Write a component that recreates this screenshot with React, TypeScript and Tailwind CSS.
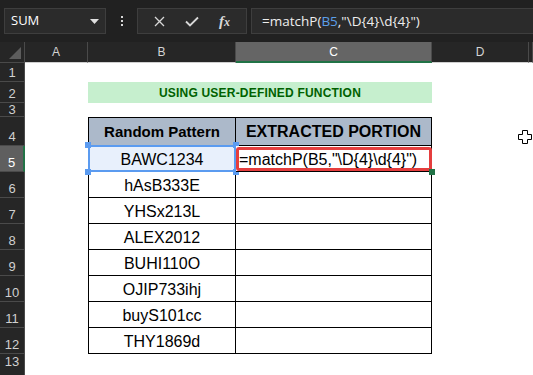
import React from 'react';

const rows = [1, 2, 3, 4, 5, 6, 7, 8, 9, 10, 11, 12, 13];
const patterns = ['BAWC1234', 'hAsB333E', 'YHSx213L', 'ALEX2012', 'BUHI110O', 'OJIP733ihj', 'buyS101cc', 'THY1869d'];

function Handle({ className }: { className: string }) {
  return <div className={`absolute w-[6px] h-[6px] bg-[#5b9bf0] ${className}`} />;
}

function RowHead({ n }: { n: number }) {
  const active = n === 5;
  const pad = n === 13 ? 'pb-[11px]' : n === 3 ? 'pb-0' : 'pb-[2px]';
  return (
    <div
      className={`min-h-0 flex items-end justify-center leading-none text-[13px] border-b border-[#4a4a4a] ${pad} ${
        active ? 'bg-[#5f5f5f] text-white border-r-2 border-r-[#217346]' : 'bg-[#262626] text-[#d0d0d0] border-r border-r-[#4a4a4a]'
      }`}
    >
      {n}
    </div>
  );
}

function Cell({ row, col }: { row: number; col: number }) {
  const inTable = row >= 4 && row <= 12 && (col === 1 || col === 2);
  let border = '';
  if (inTable) {
    border = 'border-b border-r border-black';
    if (row === 4) border += ' border-t';
    if (col === 1) border += ' border-l';
  }

  if (row === 4 && inTable) {
    return (
      <div className={`min-h-0 bg-[#acb9ca] flex items-center justify-center font-bold text-black leading-none ${border}`}>
        <span className={col === 1 ? 'text-[15px]' : 'text-[16px]'}>
          {col === 1 ? 'Random Pattern' : 'EXTRACTED PORTION'}
        </span>
      </div>
    );
  }

  if (row === 5 && col === 1) {
    return (
      <div className={`min-h-0 relative bg-[#e8f0fc] flex items-center justify-center pt-[2px] leading-none text-[16px] text-black ${border}`}>
        <div className="absolute inset-[-1px] border-2 border-[#5b9bf0]" />
        <Handle className="left-[-4px] top-[-4px]" />
        <Handle className="right-[-4px] top-[-4px]" />
        <Handle className="left-[-4px] bottom-[-4px]" />
        <Handle className="right-[-4px] bottom-[-4px]" />
        {patterns[0]}
      </div>
    );
  }

  if (row === 5 && col === 2) {
    return (
      <div className={`min-h-0 relative bg-white flex items-center pl-[3px] pt-[2px] leading-none text-[16px] text-black whitespace-nowrap ${border}`}>
        <div className="absolute left-0 right-[-1px] top-[1px] bottom-0 border-[3px] border-[#e53e3e] rounded-[3px]" />
        <div className="absolute right-[-4px] bottom-[-4px] w-[6px] h-[6px] bg-[#217346]" />
        <span className="relative">=matchP(B5,"\D{'{'}4{'}'}\d{'{'}4{'}'}")</span>
      </div>
    );
  }

  if (inTable && col === 1) {
    return (
      <div className={`min-h-0 bg-white flex items-center justify-center pt-[2px] leading-none text-[16px] text-black ${border}`}>
        {patterns[row - 5]}
      </div>
    );
  }

  return <div className={`min-h-0 bg-white ${border}`} />;
}

export default function App() {
  return (
    <div className="w-[533px] h-[375px] overflow-hidden bg-[#212121] font-['Liberation_Sans',Arial,sans-serif] relative">
      {/* formula toolbar */}
      <div className="h-[42px] flex items-center pl-[4px] font-['Open_Sans','Noto_Sans',sans-serif]">
        <div className="w-[102px] h-[26px] bg-[#2b2b2b] border border-[#3e3e3e] flex items-center justify-between pl-[6px] pr-[6px] text-[13px] text-white">
          <span>SUM</span>
          <svg width="9" height="5" viewBox="0 0 9 5"><path d="M0 0h9L4.5 5z" fill="#e0e0e0" /></svg>
        </div>
        <div className="w-[31px] flex flex-col items-center gap-[2px]">
          <div className="w-[2px] h-[2px] bg-[#d8d8d8]" />
          <div className="w-[2px] h-[2px] bg-[#d8d8d8]" />
          <div className="w-[2px] h-[2px] bg-[#d8d8d8]" />
        </div>
        <div className="w-[110px] h-[26px] bg-[#2b2b2b] border border-[#3e3e3e] flex items-center justify-around px-[6px]">
          <svg width="11" height="11" viewBox="0 0 11 11"><path d="M1 1l9 9M10 1l-9 9" stroke="#d8d8d8" strokeWidth="1.3" /></svg>
          <svg width="14" height="11" viewBox="0 0 14 11"><path d="M1 5.5l4 4L13 1.5" stroke="#d8d8d8" strokeWidth="1.8" fill="none" /></svg>
          <span className="font-['Liberation_Serif',serif] italic font-bold text-[15px] text-[#d8d8d8] leading-none">f<span className="text-[12px]">x</span></span>
        </div>
        <div className="ml-[4px] flex-1 h-[26px] bg-[#2b2b2b] border-y border-l border-[#3e3e3e] flex items-center pl-[10px] text-[13.5px] text-[#eeeeee] whitespace-nowrap">
          =matchP(<span className="text-[#5b9fe8]">B5</span>,"\D{'{'}4{'}'}\d{'{'}4{'}'}")
        </div>
      </div>

      {/* sheet */}
      <div className="grid grid-cols-[25px_63px_148px_196px_97px_4px] grid-rows-[21px_19px_21px_14px_29px_26px_26px_26px_26px_26px_26px_26px_26px_26px]">
        {/* column headers */}
        <div className="bg-[#262626] border-r border-b border-[#4a4a4a] flex items-end justify-end p-[3px]">
          <svg width="12" height="12" viewBox="0 0 12 12"><path d="M12 0v12H0z" fill="#5c5c5c" /></svg>
        </div>
        {['A', 'B', 'C', 'D', ''].map((c) => (
          <div
            key={c || 'e'}
            className={`flex items-center justify-center text-[12px] border-r border-[#4a4a4a] ${
              c === 'C' ? 'bg-[#656565] text-white border-b-2 border-b-[#217346]' : 'bg-[#262626] text-[#d4d4d4] border-b border-b-[#cfcfcf]'
            }`}
          >
            {c}
          </div>
        ))}

        {rows.map((row) => (
          <React.Fragment key={row}>
            <RowHead n={row} />
            {row === 2 ? (
              <>
                <div className="bg-white" />
                <div className="col-span-2 min-h-0 bg-[#c6efce] flex items-center justify-center leading-none text-[12px] tracking-[0.2px] font-bold text-[#006100]">
                  USING USER-DEFINED FUNCTION
                </div>
                <div className="bg-white" />
                <div className="bg-white" />
              </>
            ) : (
              <>
                <div className="bg-white" />
                <Cell row={row} col={1} />
                <Cell row={row} col={2} />
                <div className="bg-white" />
                <div className="bg-white" />
              </>
            )}
          </React.Fragment>
        ))}
      </div>

      {/* mouse cursor */}
      <svg className="absolute left-[518px] top-[130px]" width="14" height="14" viewBox="0 0 14 14">
        <path d="M4.5 0.5h5v4h4v5h-4v4h-5v-4h-4v-5h4z" fill="white" stroke="black" strokeWidth="1" />
      </svg>
    </div>
  );
}
